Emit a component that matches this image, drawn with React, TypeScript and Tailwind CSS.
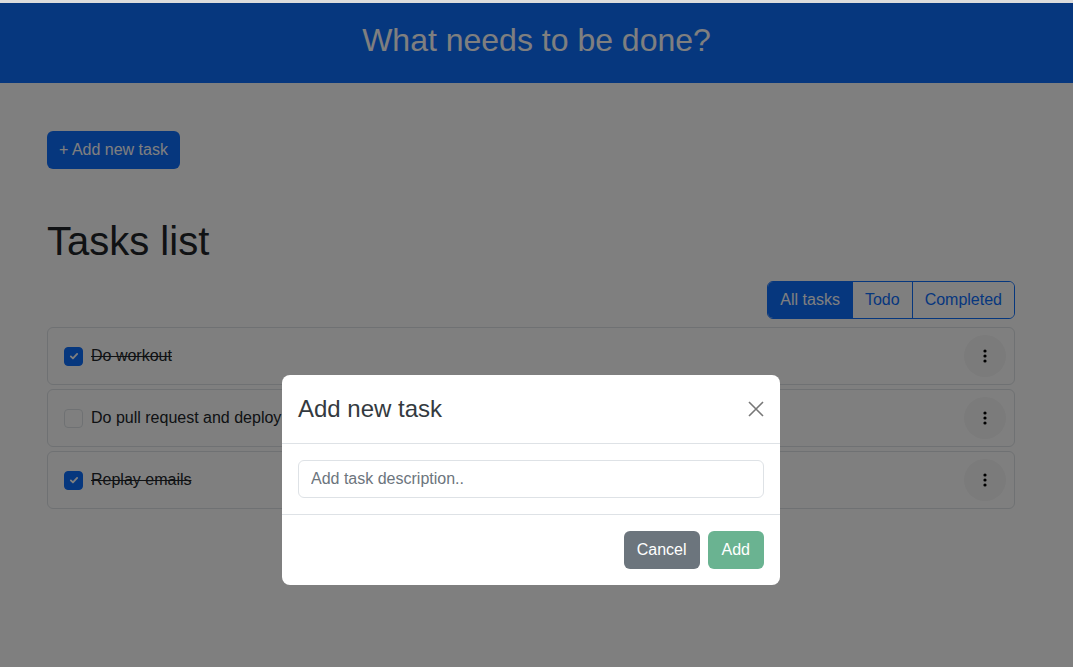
import { useState } from "react";

type Task = { id: number; text: string; done: boolean };

const initialTasks: Task[] = [
  { id: 1, text: "Do workout", done: true },
  { id: 2, text: "Do pull request and deploy", done: false },
  { id: 3, text: "Replay emails", done: true },
];

function KebabIcon() {
  return (
    <svg width="4" height="14" viewBox="0 0 4 14" fill="#000">
      <circle cx="2" cy="2" r="1.6" />
      <circle cx="2" cy="7" r="1.6" />
      <circle cx="2" cy="12" r="1.6" />
    </svg>
  );
}

function CheckIcon() {
  return (
    <svg width="14" height="14" viewBox="0 0 20 20" fill="none">
      <path d="M5.5 10.5l3 3 6-6.5" stroke="#fff" strokeWidth="2.6" strokeLinecap="round" strokeLinejoin="round" />
    </svg>
  );
}

export default function App() {
  const [tasks, setTasks] = useState<Task[]>(initialTasks);
  const [filter, setFilter] = useState("all");
  const [description, setDescription] = useState("");

  // Toggle the done state of a task
  const toggleTask = (id: number) => {
    setTasks(tasks.map((t) => (t.id === id ? { ...t, done: !t.done } : t)));
  };

  const filters = [
    { key: "all", label: "All tasks" },
    { key: "todo", label: "Todo" },
    { key: "completed", label: "Completed" },
  ];

  return (
    <div className="relative min-h-[667px] bg-white font-['Liberation_Sans',Arial,sans-serif] text-[#212529]">
      <div className="h-[3px] bg-[#dcdcdc]" />

      {/* Header */}
      <header className="h-[80px] bg-[#0d6efd] pt-[18px] text-center">
        <h1 className="text-[32px] leading-[1.2] text-white">What needs to be done?</h1>
      </header>

      <main className="pl-[47px] pr-[58px] pt-[48px]">
        <button className="h-[38px] rounded-md bg-[#0d6efd] px-3 text-base text-white">
          + Add new task
        </button>

        <h2 className="mt-[48px] text-[40px] leading-[1.2]">Tasks list</h2>

        {/* Filter buttons */}
        <div className="mt-[16px] flex justify-end">
          <div className="flex overflow-hidden rounded-md border border-[#0d6efd]">
            {filters.map((f, i) => (
              <button
                key={f.key}
                onClick={() => setFilter(f.key)}
                className={`h-[36px] px-3 text-base ${i > 0 ? "border-l border-[#0d6efd]" : ""} ${
                  filter === f.key ? "bg-[#0d6efd] text-white" : "bg-white text-[#0d6efd]"
                }`}
              >
                {f.label}
              </button>
            ))}
          </div>
        </div>

        {/* Tasks */}
        <div className="mt-2 flex flex-col gap-1">
          {tasks.map((task) => (
            <div
              key={task.id}
              className="flex h-[58px] items-center rounded-md border border-[#dee2e6] pl-4 pr-2"
            >
              <button
                onClick={() => toggleTask(task.id)}
                className={`flex h-[19px] w-[19px] items-center justify-center rounded-[4px] border ${
                  task.done ? "border-[#0d6efd] bg-[#0d6efd]" : "border-[#dee2e6] bg-white"
                }`}
              >
                {task.done && <CheckIcon />}
              </button>
              <span className={`ml-[8px] flex-1 text-base ${task.done ? "line-through" : ""}`}>
                {task.text}
              </span>
              <button className="flex h-[42px] w-[42px] items-center justify-center rounded-full bg-[#f6f6f6]">
                <KebabIcon />
              </button>
            </div>
          ))}
        </div>
      </main>

      {/* Modal backdrop */}
      <div className="fixed inset-x-0 bottom-0 top-[3px] bg-black/50" />

      {/* Modal */}
      <div className="absolute left-[282px] top-[375px] w-[498px] rounded-lg bg-white">
        <div className="flex h-[69px] items-center justify-between border-b border-[#dee2e6] px-4">
          <h3 className="text-[24px] leading-[1.2] text-[#343a40]">Add new task</h3>
          <button className="flex h-[16px] w-[16px] items-center justify-center">
            <svg width="16" height="16" viewBox="0 0 16 16">
              <path d="M1 1l14 14M15 1L1 15" stroke="#777" strokeWidth="1.6" />
            </svg>
          </button>
        </div>
        <div className="border-b border-[#dee2e6] p-4">
          <input
            value={description}
            onChange={(e) => setDescription(e.target.value)}
            placeholder="Add task description.."
            className="h-[38px] w-full rounded-md border border-[#dee2e6] px-3 text-base outline-none placeholder:text-[#6c757d]"
          />
        </div>
        <div className="flex justify-end gap-2 p-4">
          <button className="h-[38px] rounded-md bg-[#6c757d] px-[13px] text-base text-white">Cancel</button>
          <button className="h-[38px] rounded-md bg-[#6ab391] px-[14px] text-base text-white">Add</button>
        </div>
      </div>
    </div>
  );
}
